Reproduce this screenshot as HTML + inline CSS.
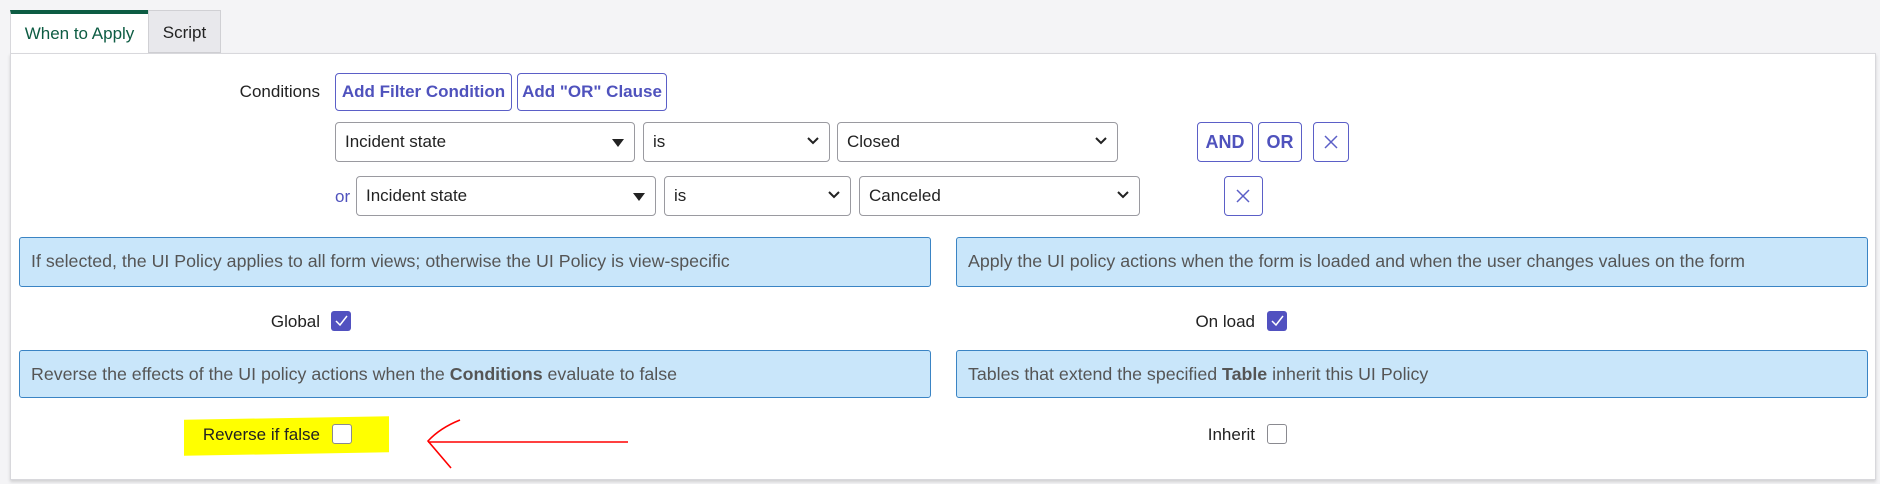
<!DOCTYPE html>
<html><head><meta charset="utf-8"><style>
body{margin:0;width:1880px;height:484px;background:#f4f4f6;font-family:"Liberation Sans",sans-serif;position:relative;overflow:hidden;color:#222}
.a{position:absolute;box-sizing:border-box}
.tab{top:10px;height:44px;font-size:17px;line-height:44px;text-align:center}
.panel{left:10px;top:53px;width:1866px;height:427px;background:#fff;border:1px solid #d8d8dc;box-shadow:0 2px 3px rgba(0,0,0,.15)}
.btn{border:1.5px solid #5b5fc7;border-radius:4px;color:#4f52bd;font-weight:bold;font-size:17px;text-align:center;background:#fff}
.sel{border:1.5px solid #9a9aa0;border-radius:4px;font-size:17px;padding-left:9px;background:#fff;line-height:37px}
.sel svg{position:absolute;right:10px;top:14px}
.info{background:#c9e6fa;border:1.5px solid #3a84c4;border-radius:3px;color:#555;font-size:17.8px;padding-left:11px;line-height:46px;white-space:nowrap}
.lbl{font-size:17px;text-align:right}
.cb{width:20px;height:20px;border-radius:3px}
.on{background:#5151c0}
.off{border:1.5px solid #8a8a90;background:#fff}
</style></head><body>
<div class="a tab" style="left:10px;width:138px;background:#fff;border-top:4px solid #0d5c43;color:#0d5c43;line-height:40px;height:44px;border-left:1px solid #d8d8dc">When to Apply</div>
<div class="a tab" style="left:148px;width:73px;background:#e8e8ec;border:1px solid #d0d0d4;height:43px">Script</div>
<div class="a panel"></div>
<div class="a lbl" style="left:200px;width:120px;top:82px">Conditions</div>
<div class="a btn" style="left:335px;top:73px;width:177px;height:38px;line-height:35px">Add Filter Condition</div>
<div class="a btn" style="left:517px;top:73px;width:150px;height:38px;line-height:35px">Add "OR" Clause</div>
<div class="a sel" style="left:335px;top:122px;width:300px;height:40px">Incident state<svg class="a" style="top:16px" width="12" height="8"><path d="M0 0h12L6 8z" fill="#222"/></svg></div>
<div class="a sel" style="left:643px;top:122px;width:187px;height:40px">is<svg class="a" width="12" height="9"><path d="M1 1l5 5 5-5" stroke="#222" stroke-width="2" fill="none"/></svg></div>
<div class="a sel" style="left:837px;top:122px;width:281px;height:40px">Closed<svg class="a" width="12" height="9"><path d="M1 1l5 5 5-5" stroke="#222" stroke-width="2" fill="none"/></svg></div>
<div class="a btn" style="left:1197px;top:122px;width:56px;height:40px;line-height:38px;font-size:18px">AND</div>
<div class="a btn" style="left:1258px;top:122px;width:44px;height:40px;line-height:38px;font-size:18px">OR</div>
<div class="a btn" style="left:1313px;top:122px;width:36px;height:40px;font-weight:normal"><svg class="a" style="left:10px;top:12px" width="14" height="14"><path d="M1 1l12 12M13 1L1 13" stroke="#5b5fc7" stroke-width="1.5"/></svg></div>
<div class="a" style="left:335px;top:187px;font-size:17px;color:#4f52bd">or</div>
<div class="a sel" style="left:356px;top:176px;width:300px;height:40px">Incident state<svg class="a" style="top:16px" width="12" height="8"><path d="M0 0h12L6 8z" fill="#222"/></svg></div>
<div class="a sel" style="left:664px;top:176px;width:187px;height:40px">is<svg class="a" width="12" height="9"><path d="M1 1l5 5 5-5" stroke="#222" stroke-width="2" fill="none"/></svg></div>
<div class="a sel" style="left:859px;top:176px;width:281px;height:40px">Canceled<svg class="a" width="12" height="9"><path d="M1 1l5 5 5-5" stroke="#222" stroke-width="2" fill="none"/></svg></div>
<div class="a btn" style="left:1224px;top:176px;width:39px;height:40px"><svg class="a" style="left:11px;top:12px" width="14" height="14"><path d="M1 1l12 12M13 1L1 13" stroke="#5b5fc7" stroke-width="1.5"/></svg></div>
<div class="a info" style="left:19px;top:237px;width:912px;height:50px">If selected, the UI Policy applies to all form views; otherwise the UI Policy is view-specific</div>
<div class="a info" style="left:956px;top:237px;width:912px;height:50px">Apply the UI policy actions when the form is loaded and when the user changes values on the form</div>
<div class="a lbl" style="left:150px;width:170px;top:312px">Global</div>
<div class="a cb on" style="left:331px;top:311px"><svg width="20" height="20"><path d="M5 10l4 4 7-9" stroke="#fff" stroke-width="1.5" fill="none"/></svg></div>
<div class="a lbl" style="left:1100px;width:155px;top:312px">On load</div>
<div class="a cb on" style="left:1267px;top:311px"><svg width="20" height="20"><path d="M5 10l4 4 7-9" stroke="#fff" stroke-width="1.5" fill="none"/></svg></div>
<div class="a info" style="left:19px;top:350px;width:912px;height:48px">Reverse the effects of the UI policy actions when the <b>Conditions</b> evaluate to false</div>
<div class="a info" style="left:956px;top:350px;width:912px;height:48px">Tables that extend the specified <b>Table</b> inherit this UI Policy</div>
<div class="a" style="left:184px;top:418px;width:205px;height:36px;background:#ffff00;transform:skewY(-1deg)"></div>
<div class="a lbl" style="left:150px;width:170px;top:425px">Reverse if false</div>
<div class="a cb off" style="left:332px;top:424px"></div>
<div class="a lbl" style="left:1100px;width:155px;top:425px">Inherit</div>
<div class="a cb off" style="left:1267px;top:424px"></div>
<svg class="a" style="left:0;top:0" width="1880" height="484"><path d="M428 442L628 442M460 420Q440 428 428 441Q440 455 451 468" stroke="#f00" stroke-width="1.6" fill="none"/></svg>
</body></html>
